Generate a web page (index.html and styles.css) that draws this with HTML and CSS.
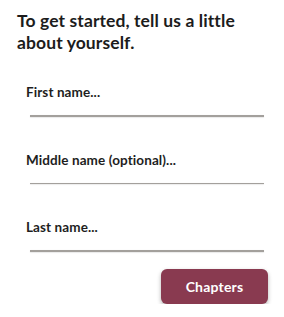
FILE: index.html
```html
<!DOCTYPE html>
<html lang="en">
<head>
    <meta charset="UTF-8">
    <meta name="viewport" content="width=device-width, initial-scale=1.0">
    <title>About you</title>
    <link rel="stylesheet" href="styles.css">
</head>
<body>
    <div class="intro">
        <h1>To get started, tell us a little about yourself.</h1>

        <div class="fields">
            <div class="field">
                <label for="first-name">First name...</label>
                <span class="underline" id="first-name"></span>
            </div>
            <div class="field">
                <label for="middle-name">Middle name (optional)...</label>
                <span class="underline" id="middle-name"></span>
            </div>
            <div class="field">
                <label for="last-name">Last name...</label>
                <span class="underline" id="last-name"></span>
            </div>
        </div>

        <div class="actions">
            <button class="btn">Chapters</button>
        </div>
    </div>
</body>
</html>
```

FILE: styles.css
```css
/* General Styling */
body {
    margin: 0;
    padding: 0;
    font-family: 'Lato', 'Noto Sans', sans-serif;
    background: #ffffff;
    color: #1e1e1e;
}

.intro {
    padding: 10px 17px 0 17px;
}

h1 {
    margin: 0;
    font-size: 17.5px;
    line-height: 22px;
    font-weight: 700;
    letter-spacing: 0.1px;
    color: #1c1c1c;
    width: 240px;
}

.fields {
    display: flex;
    flex-direction: column;
    gap: 35px;
    margin-top: 30px;
    padding-left: 9px;
}

.field {
    display: flex;
    flex-direction: column;
}

.field label {
    font-size: 13.5px;
    line-height: 16px;
    font-weight: 700;
    letter-spacing: 0.1px;
    color: #1e1e1e;
}

.underline {
    display: block;
    width: 234px;
    height: 1.5px;
    margin: 15px 0 0 4px;
    background: #a3a09c;
    box-shadow: 0 0.5px 1px rgba(0, 0, 0, 0.15);
}

.actions {
    display: flex;
    justify-content: flex-end;
    margin-top: 17px;
    padding-right: 16px;
    margin-right: -17px;
}

.btn {
    width: 107px;
    height: 35px;
    border: none;
    border-radius: 6px;
    background: #893a50;
    color: #ffffff;
    font-family: inherit;
    font-size: 14px;
    font-weight: 700;
    letter-spacing: 0.2px;
    box-shadow: 0 2px 4px rgba(0, 0, 0, 0.3);
    cursor: pointer;
}
```
